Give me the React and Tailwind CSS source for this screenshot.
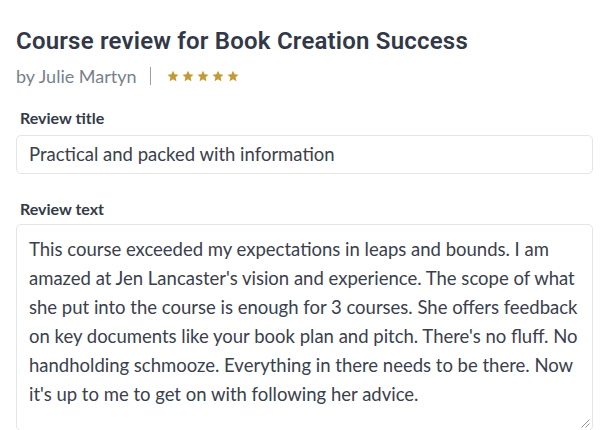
import React from "react";

const Star = () => (
  <svg width="12" height="12" viewBox="0 0 24 24" className="fill-[#c49a32]">
    <path d="M12 1.5l3.2 7.1 7.8.8-5.8 5.3 1.6 7.7L12 18.5l-6.8 3.9 1.6-7.7L1 9.4l7.8-.8z" />
  </svg>
);

const lines = [
  "This course exceeded my expectations in leaps and bounds. I am",
  "amazed at Jen Lancaster's vision and experience. The scope of what",
  "she put into the course is enough for 3 courses. She offers feedback",
  "on key documents like your book plan and pitch. There's no fluff. No",
  "handholding schmooze. Everything in there needs to be there. Now",
  "it's up to me to get on with following her advice.",
];

export default function App() {
  return (
    <div className="w-[600px] h-[430px] overflow-hidden bg-white pl-4 pr-[7px] pt-[26px]" style={{ fontFamily: "Lato, 'Liberation Sans', sans-serif" }}>
      <h1 className="text-[24px] leading-[30px] font-semibold text-[#333848] tracking-[0.2px]" style={{ fontFamily: "Roboto, sans-serif" }}>
        Course review for Book Creation Success
      </h1>
      <div className="mt-[8px] flex items-center h-[24px]">
        <span className="text-[18px] text-[#7a7f8c]">by Julie Martyn</span>
        <span className="ml-[13px] w-px h-[18px] bg-[#9a9ea8]" />
        <span className="ml-[16px] flex gap-[3px]">
          <Star /><Star /><Star /><Star /><Star />
        </span>
      </div>
      <div className="mt-[20px] pl-1 text-[16px] leading-[20px] font-bold text-[#343a46]">Review title</div>
      <div className="mt-[7px] h-[39px] rounded-[5px] border border-[#e3e5e8] flex items-center px-3 text-[18.5px] text-[#3b404c]">
        Practical and packed with information
      </div>
      <div className="mt-[25px] pl-1 text-[16px] leading-[20px] font-bold text-[#343a46]">Review text</div>
      <div className="mt-[5px] relative h-[207px] rounded-[5px] border border-[#e3e5e8] px-3 pt-[10px] text-[18.5px] leading-[29px] text-[#3b404c]">
        {lines.map((l) => (
          <div key={l} className="whitespace-nowrap">{l}</div>
        ))}
        <svg className="absolute right-[2px] bottom-[2px]" width="10" height="10" viewBox="0 0 10 10">
          <path d="M9.5 1.5L1.5 9.5M9.5 5.5L5.5 9.5" stroke="#8f939b" strokeWidth="1" />
        </svg>
      </div>
    </div>
  );
}
